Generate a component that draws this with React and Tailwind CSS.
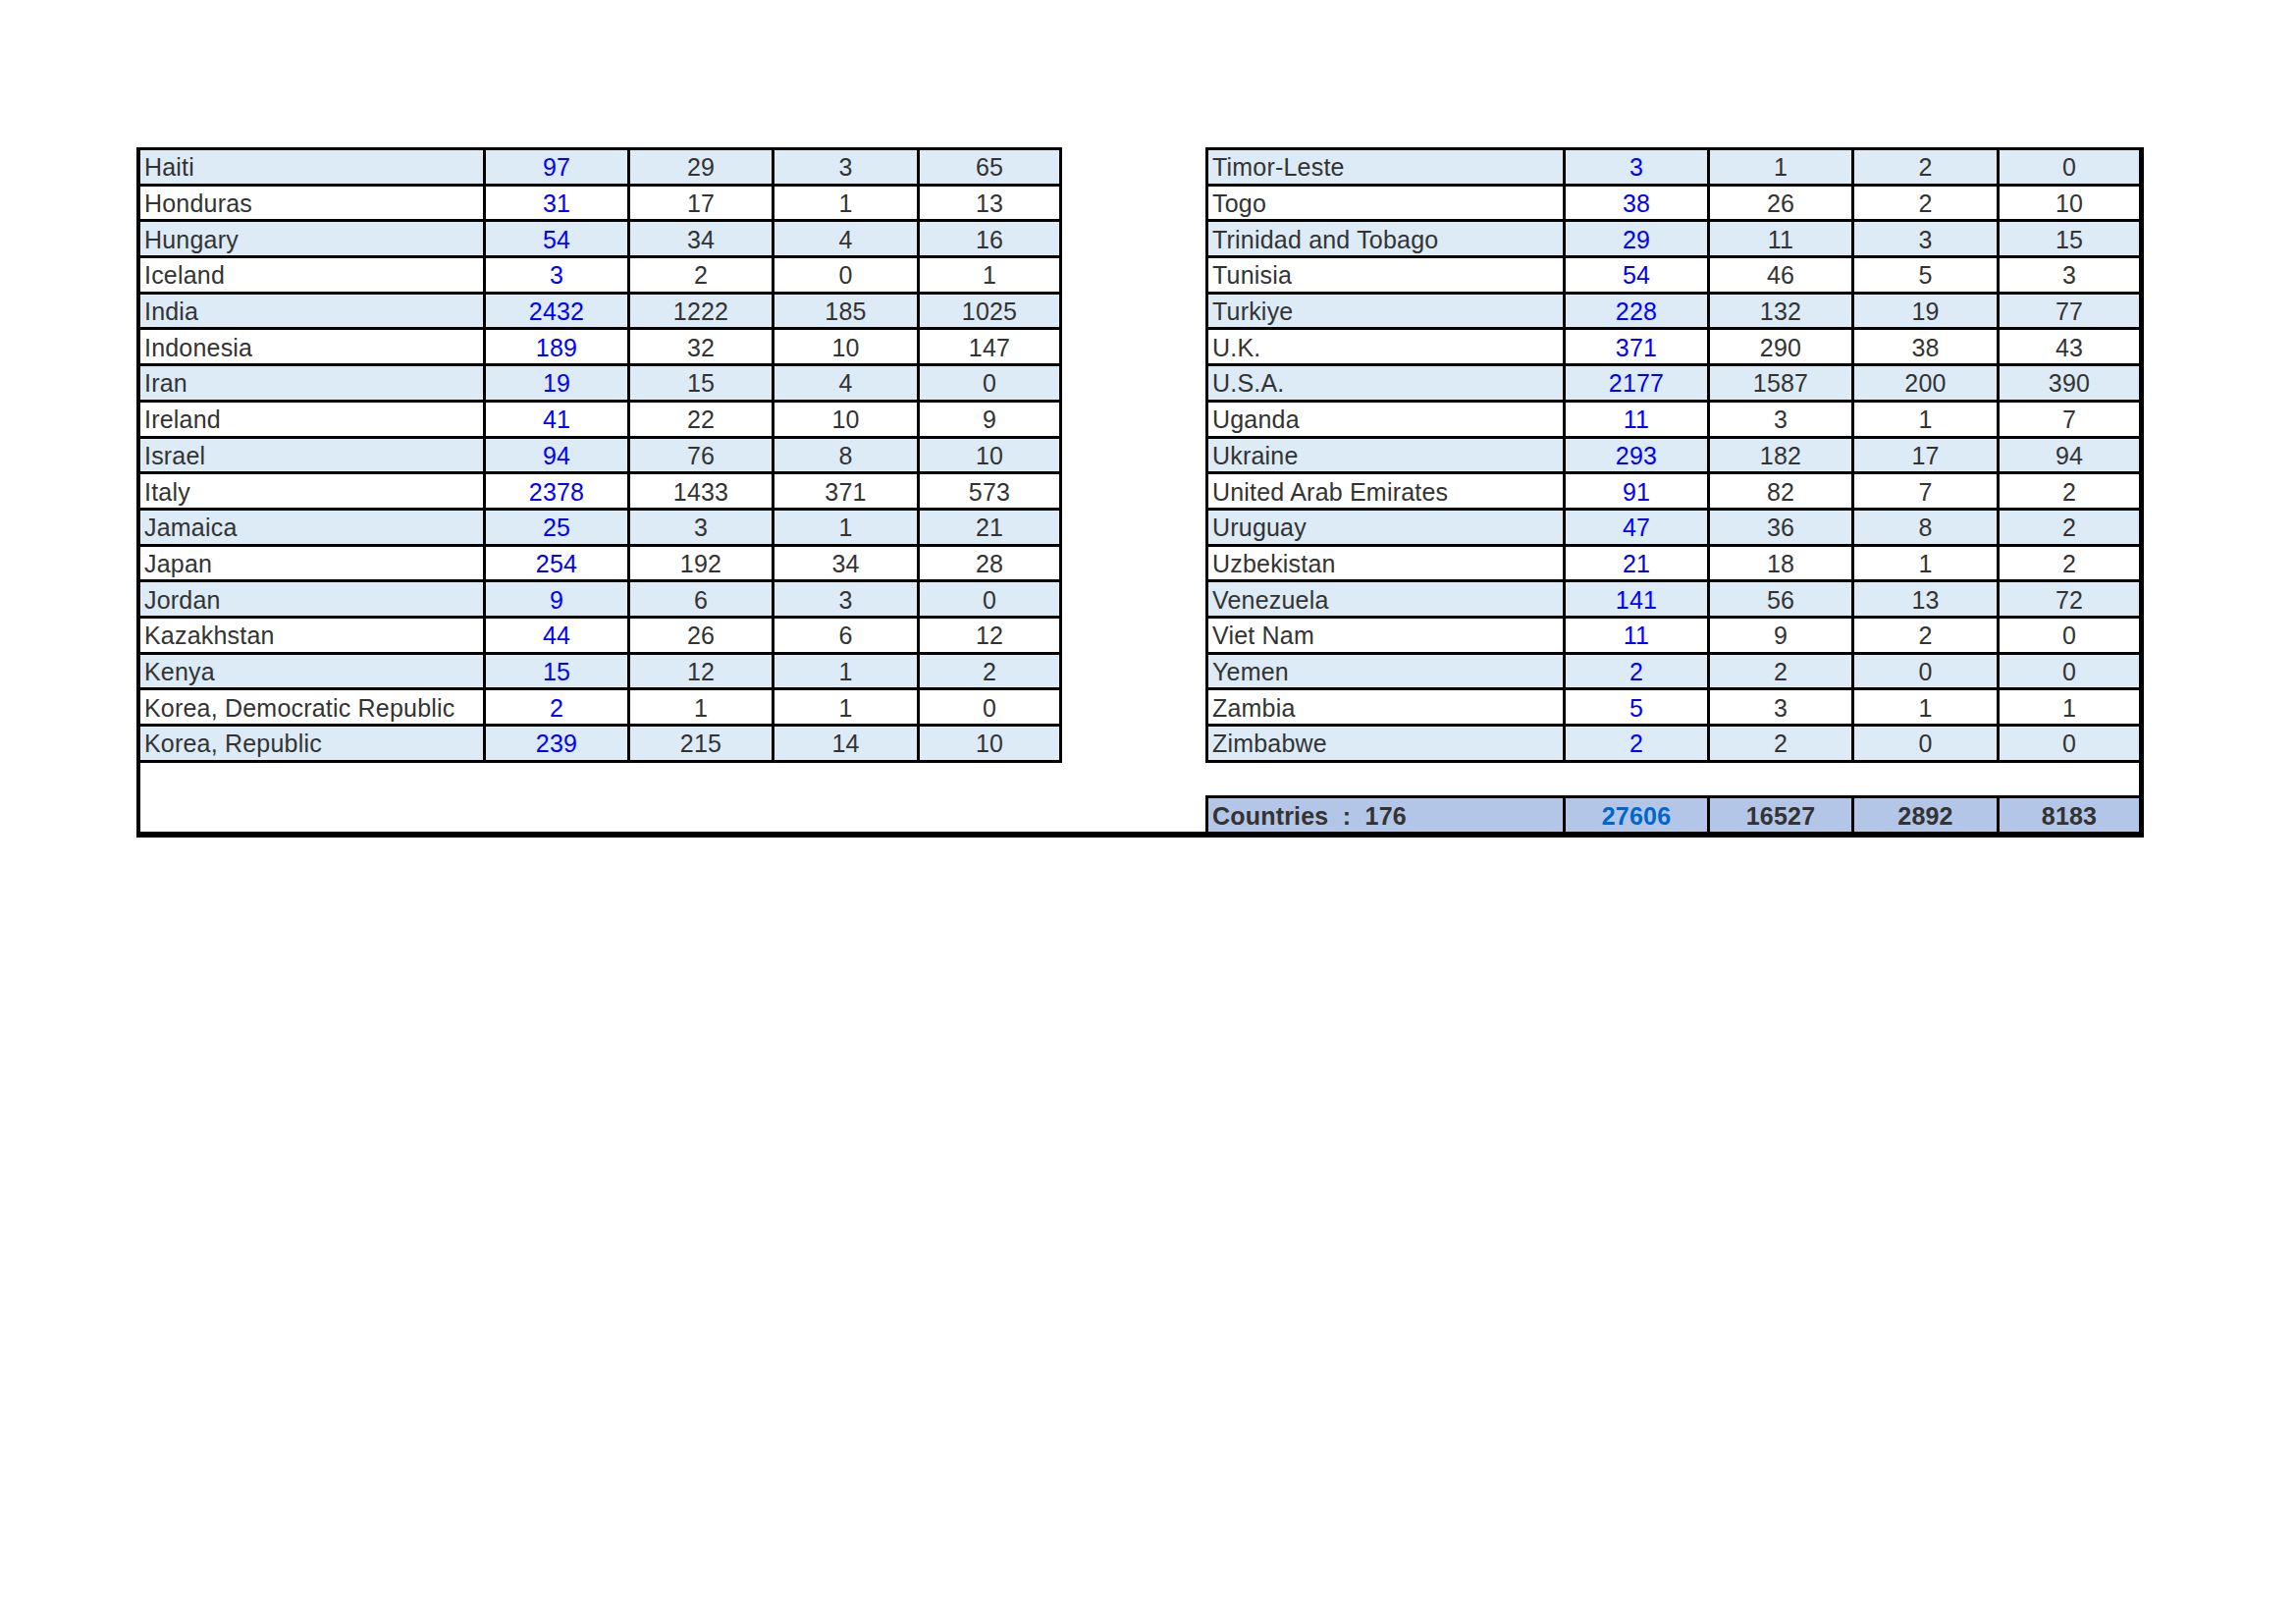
const leftRows = [
  ["Haiti", 97, 29, 3, 65],
  ["Honduras", 31, 17, 1, 13],
  ["Hungary", 54, 34, 4, 16],
  ["Iceland", 3, 2, 0, 1],
  ["India", 2432, 1222, 185, 1025],
  ["Indonesia", 189, 32, 10, 147],
  ["Iran", 19, 15, 4, 0],
  ["Ireland", 41, 22, 10, 9],
  ["Israel", 94, 76, 8, 10],
  ["Italy", 2378, 1433, 371, 573],
  ["Jamaica", 25, 3, 1, 21],
  ["Japan", 254, 192, 34, 28],
  ["Jordan", 9, 6, 3, 0],
  ["Kazakhstan", 44, 26, 6, 12],
  ["Kenya", 15, 12, 1, 2],
  ["Korea, Democratic Republic", 2, 1, 1, 0],
  ["Korea, Republic", 239, 215, 14, 10],
];

const rightRows = [
  ["Timor-Leste", 3, 1, 2, 0],
  ["Togo", 38, 26, 2, 10],
  ["Trinidad and Tobago", 29, 11, 3, 15],
  ["Tunisia", 54, 46, 5, 3],
  ["Turkiye", 228, 132, 19, 77],
  ["U.K.", 371, 290, 38, 43],
  ["U.S.A.", 2177, 1587, 200, 390],
  ["Uganda", 11, 3, 1, 7],
  ["Ukraine", 293, 182, 17, 94],
  ["United Arab Emirates", 91, 82, 7, 2],
  ["Uruguay", 47, 36, 8, 2],
  ["Uzbekistan", 21, 18, 1, 2],
  ["Venezuela", 141, 56, 13, 72],
  ["Viet Nam", 11, 9, 2, 0],
  ["Yemen", 2, 2, 0, 0],
  ["Zambia", 5, 3, 1, 1],
  ["Zimbabwe", 2, 2, 0, 0],
];

// widths of the four number columns, each one carries its own left rule
const numCols = ["w-[147px]", "w-[147px]", "w-[148px]", "w-[145px]"];

const Row = ({ row, index, nameWidth }) => {
  const [name, ...nums] = row;
  const shaded = index % 2 === 0;
  return (
    <div
      className={`flex h-[36.7px] border-b-[3px] border-black ${
        shaded ? "bg-[#ddebf7]" : "bg-white"
      }`}
    >
      <div className={`${nameWidth} flex items-center pl-[4px] pt-[2px] text-[#333333]`}>
        {name}
      </div>
      {nums.map((n, i) => (
        <div
          key={i}
          className={`${numCols[i]} flex items-center justify-center pt-[2px] border-l-[3px] border-black ${
            i === 0 ? "text-[#0000ff]" : "text-[#333333]"
          }`}
        >
          {n}
        </div>
      ))}
    </div>
  );
};

const CountryTable = ({ rows, nameWidth, className }) => (
  <div className={`border-t-[3px] border-black ${className}`}>
    {rows.map((row, i) => (
      <Row key={row[0]} row={row} index={i} nameWidth={nameWidth} />
    ))}
  </div>
);

export default function App() {
  const totals = [27606, 16527, 2892, 8183];

  return (
    <div
      className="min-h-screen bg-white pt-[150px] pl-[139px] text-[25px] leading-none tracking-[0.2px]"
      style={{ fontFamily: '"Liberation Sans", Arial, sans-serif' }}
    >
      <div className="w-[2045px] border-l-4 border-r-[5px] border-b-[6px] border-black">
        <div className="flex items-start">
          <CountryTable
            rows={leftRows}
            nameWidth="w-[349px]"
            className="w-[939px] border-r-[3px]"
          />
          <div className="w-[146px] shrink-0" />
          <CountryTable
            rows={rightRows}
            nameWidth="w-[361px]"
            className="w-[951px] border-l-[3px]"
          />
        </div>

        <div className="h-[33px]" />

        <div className="flex">
          <div className="w-[1085px] shrink-0" />
          <div className="flex h-[37px] w-[951px] border-t-[3px] border-l-[3px] border-black bg-[#b4c6e7] font-bold text-[#333333]">
            <div className="w-[361px] flex items-center pl-[4px] pt-[3px] whitespace-pre">
              {"Countries  :  176"}
            </div>
            {totals.map((t, i) => (
              <div
                key={i}
                className={`${numCols[i]} flex items-center justify-center pt-[3px] border-l-[3px] border-black ${
                  i === 0 ? "text-[#0066cc]" : ""
                }`}
              >
                {t}
              </div>
            ))}
          </div>
        </div>
      </div>
    </div>
  );
}
